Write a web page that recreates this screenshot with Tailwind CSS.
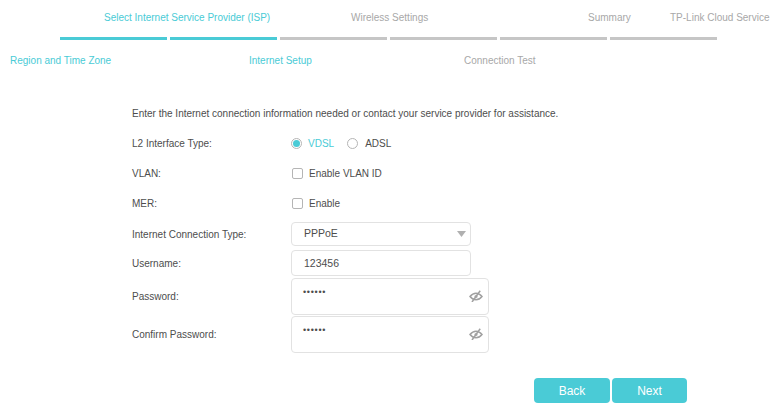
<!DOCTYPE html>
<html lang="en">
<head>
  <meta charset="UTF-8" />
  <title>Quick Setup</title>
  <script src="https://cdn.jsdelivr.net/npm/@tailwindcss/browser@4"></script>
</head>
<body class="bg-white text-[#4d4d4d] font-['Liberation_Sans',Arial,sans-serif] text-[10px] w-[778px] h-[408px] overflow-hidden">

  <!-- Steps -->
  <div class="h-[72px] pt-[11px]">
    <div class="flex h-[13px] leading-[13px] pl-[104px] text-[#a8a8a8] whitespace-nowrap">
      <span class="w-[247px] text-[#4acbd6]">Select Internet Service Provider (ISP)</span>
      <span class="w-[237px]">Wireless Settings</span>
      <span class="w-[82px]">Summary</span>
      <span>TP-Link Cloud Service</span>
    </div>
    <div class="flex gap-[3px] pl-[60px] mt-[13px]">
      <div class="w-[107px] h-[3px] bg-[#4acbd6]"></div>
      <div class="w-[107px] h-[3px] bg-[#4acbd6]"></div>
      <div class="w-[107px] h-[3px] bg-[#c6c6c6]"></div>
      <div class="w-[107px] h-[3px] bg-[#c6c6c6]"></div>
      <div class="w-[107px] h-[3px] bg-[#c6c6c6]"></div>
      <div class="w-[107px] h-[3px] bg-[#c6c6c6]"></div>
    </div>
    <div class="flex h-[13px] leading-[13px] mt-[14px] pl-[10px] text-[#a8a8a8] whitespace-nowrap">
      <span class="w-[239px] text-[#4acbd6]">Region and Time Zone</span>
      <span class="w-[215px] text-[#4acbd6]">Internet Setup</span>
      <span>Connection Test</span>
    </div>
  </div>

  <!-- Form -->
  <main class="pl-[132px]">
    <p class="mt-[35px] h-[14px] leading-[14px]">Enter the Internet connection information needed or contact your service provider for assistance.</p>

    <div class="flex items-center h-[30px] mt-[7px]">
      <label class="w-[159px]">L2 Interface Type:</label>
      <span class="w-[11px] h-[11px] rounded-full border border-[#b5b5b5] flex items-center justify-center">
        <span class="w-[7px] h-[7px] rounded-full bg-[#4acbd6]"></span>
      </span>
      <span class="ml-[6px] text-[#4acbd6]">VDSL</span>
      <span class="ml-[13px] w-[11px] h-[11px] rounded-full border border-[#b5b5b5]"></span>
      <span class="ml-[7px]">ADSL</span>
    </div>

    <div class="flex items-center h-[30px]">
      <label class="w-[160px]">VLAN:</label>
      <span class="w-[11px] h-[11px] rounded-[2px] border border-[#b5b5b5]"></span>
      <span class="ml-[6px]">Enable VLAN ID</span>
    </div>

    <div class="flex items-center h-[30px]">
      <label class="w-[160px]">MER:</label>
      <span class="w-[11px] h-[11px] rounded-[2px] border border-[#b5b5b5]"></span>
      <span class="ml-[6px]">Enable</span>
    </div>

    <div class="flex items-center h-[24px] mt-[4px]">
      <label class="w-[159px]">Internet Connection Type:</label>
      <div class="w-[180px] h-[24px] border border-[#e2e2e2] rounded-[4px] flex items-center justify-between pl-[12px] pr-[4px] text-[10.5px]">
        <span>PPPoE</span>
        <svg class="w-[9px] h-[6px]" viewBox="0 0 9 6"><path d="M0 0h9L4.5 6z" fill="#b0b0b0"/></svg>
      </div>
    </div>

    <div class="flex items-center h-[26px] mt-[4px]">
      <label class="w-[159px] pt-[1px]">Username:</label>
      <div class="w-[180px] h-[26px] border border-[#e2e2e2] rounded-[4px] flex items-center pl-[12px] pt-[1px] text-[10.5px]">123456</div>
    </div>

    <div class="flex items-center h-[37px] mt-[2px]">
      <label class="w-[159px]">Password:</label>
      <div class="w-[198px] h-[37px] border border-[#e2e2e2] rounded-[4px] flex justify-between pl-[11px] pr-[5px]">
        <span class="text-[9px] leading-[26px] tracking-[0.7px]">••••••</span>
        <svg class="w-[14px] h-[12px] mt-[11px]" viewBox="0 0 14 12" fill="none" stroke="#a0a0a0"><path d="M1 6.5C3 4 5 3.2 7 3.2s4 .8 6 3.3c-2 2.5-4 3.3-6 3.3s-4-.8-6-3.3z" stroke-width="1.5"/><circle cx="7" cy="6.5" r="1.6" fill="#b0b0b0" stroke="none"/><path d="M3 12 11.2 .8" stroke-width="1.5"/></svg>
      </div>
    </div>

    <div class="flex items-center h-[37px] mt-[1px]">
      <label class="w-[159px]">Confirm Password:</label>
      <div class="w-[198px] h-[37px] border border-[#e2e2e2] rounded-[4px] flex justify-between pl-[11px] pr-[5px]">
        <span class="text-[9px] leading-[26px] tracking-[0.7px]">••••••</span>
        <svg class="w-[14px] h-[12px] mt-[11px]" viewBox="0 0 14 12" fill="none" stroke="#a0a0a0"><path d="M1 6.5C3 4 5 3.2 7 3.2s4 .8 6 3.3c-2 2.5-4 3.3-6 3.3s-4-.8-6-3.3z" stroke-width="1.5"/><circle cx="7" cy="6.5" r="1.6" fill="#b0b0b0" stroke="none"/><path d="M3 12 11.2 .8" stroke-width="1.5"/></svg>
      </div>
    </div>

    <div class="flex gap-[2px] ml-[402px] mt-[25px]">
      <button class="w-[76px] h-[25px] rounded-[4px] bg-[#4acbd6] text-white text-[12px]">Back</button>
      <button class="w-[75px] h-[25px] rounded-[4px] bg-[#4acbd6] text-white text-[12px]">Next</button>
    </div>
  </main>

</body>
</html>
